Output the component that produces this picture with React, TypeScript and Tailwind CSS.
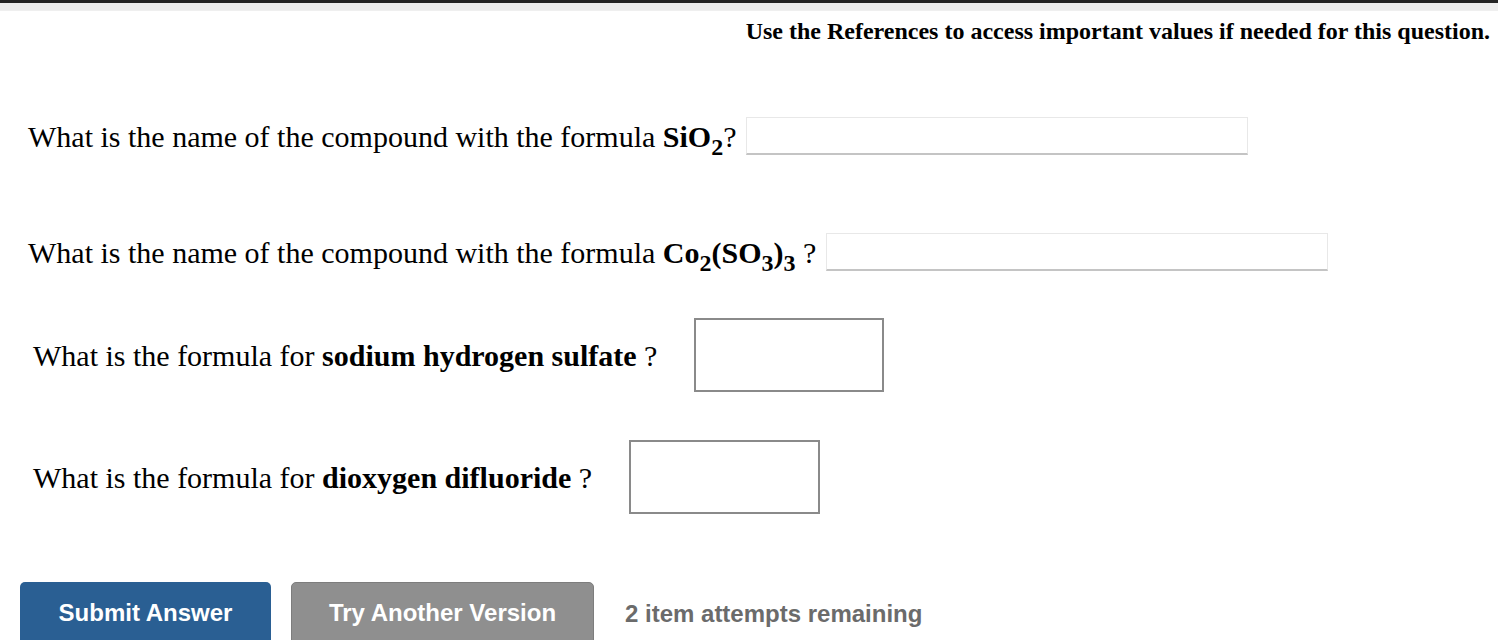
function Sub({ children }: { children: React.ReactNode }) {
  return <sub className="bottom-[-0.35em] text-[80%]">{children}</sub>;
}

export default function App() {
  return (
    <div className="min-h-screen w-full bg-white text-black font-['Liberation_Serif',serif]">
      <div className="h-[3px] bg-[#262626]" />
      <div className="h-[8px] bg-[#efefef]" />

      {/* references hint */}
      <div className="flex h-[40px] items-center justify-end pr-[8px]">
        <p className="text-[24px] font-bold">Use the References to access important values if needed for this question.</p>
      </div>

      {/* question 1 */}
      <div className="mt-[66px] flex h-[38px] items-center pl-[28px]">
        <span className="text-[30px]">
          What is the name of the compound with the formula <b>SiO<Sub>2</Sub></b>?
        </span>
        <input
          type="text"
          className="ml-[9px] h-[38px] w-[502px] border border-[#e8e8e8] border-b-2 border-b-[#c4c4c4] outline-none"
        />
      </div>

      {/* question 2 */}
      <div className="mt-[78px] flex h-[38px] items-center pl-[28px]">
        <span className="text-[30px]">
          What is the name of the compound with the formula <b>Co<Sub>2</Sub>(SO<Sub>3</Sub>)<Sub>3</Sub></b> ?
        </span>
        <input
          type="text"
          className="ml-[10px] h-[38px] w-[502px] border border-[#e8e8e8] border-b-2 border-b-[#c4c4c4] outline-none"
        />
      </div>

      {/* question 3 */}
      <div className="mt-[47px] flex h-[74px] items-center pl-[33px]">
        <span className="text-[30px]">
          What is the formula for <b>sodium hydrogen sulfate</b> ?
        </span>
        <input type="text" className="ml-[37px] h-[74px] w-[190px] border-2 border-[#8a8a8a] outline-none" />
      </div>

      {/* question 4 */}
      <div className="mt-[48px] flex h-[74px] items-center pl-[33px]">
        <span className="text-[30px]">
          What is the formula for <b>dioxygen difluoride</b> ?
        </span>
        <input type="text" className="ml-[37px] h-[74px] w-[191px] border-2 border-[#8a8a8a] outline-none" />
      </div>

      {/* actions */}
      <div className="mt-[68px] flex items-start pl-[20px] font-['Liberation_Sans',Arial,sans-serif]">
        <button className="h-[64px] w-[251px] rounded-t-[5px] bg-[#2a5f93] pb-[2px] text-[24px] font-bold text-white">
          Submit Answer
        </button>
        <button className="ml-[20px] h-[64px] w-[303px] rounded-t-[5px] border border-[#7d7d7d] bg-[#8f8f8f] pb-[2px] text-[24px] font-bold text-white">
          Try Another Version
        </button>
        <span className="ml-[31px] mt-[14px] text-[24px] font-bold text-[#6b6b6b]">2 item attempts remaining</span>
      </div>
    </div>
  );
}
